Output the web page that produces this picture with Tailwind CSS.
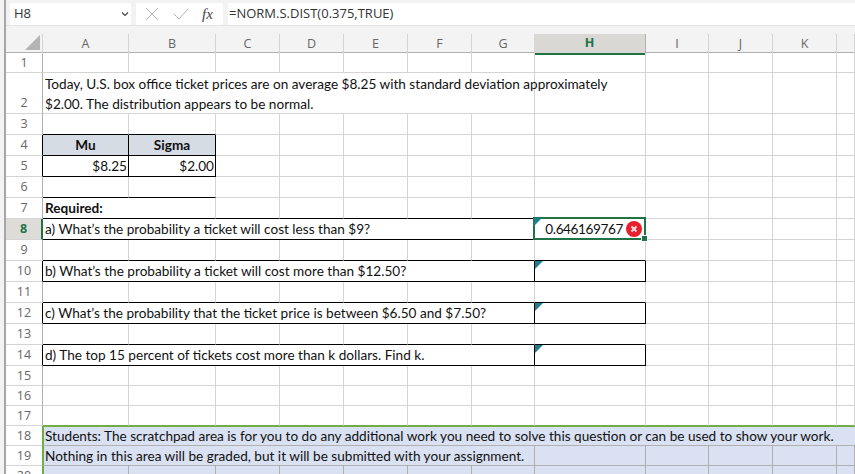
<!DOCTYPE html>
<html lang="en">
<head>
  <meta charset="UTF-8" />
  <title>Sheet</title>
  <script src="https://cdn.jsdelivr.net/npm/@tailwindcss/browser@4"></script>
</head>
<body class="w-[855px] h-[474px] overflow-hidden bg-white text-[13.6px] text-[#111] font-['Lato','Liberation_Sans',sans-serif]">
  <div class="flex h-full">
    <div class="w-[4px] shrink-0 bg-[#f3f3f3]"></div>
    <div class="w-[2px] shrink-0 bg-[#a6a6a6]"></div>
    <div class="flex-1 min-w-0 flex flex-col overflow-hidden">
      <!-- formula bar -->
      <div class="h-[26px] shrink-0 bg-[#f3f3f3] border-b border-[#e3e3e3] -ml-[2px] flex items-stretch pt-[3px] pl-[6px] gap-[5px] font-['Open_Sans',sans-serif] text-[13px] text-[#333]">
        <div class="w-[121px] bg-white flex items-center justify-between pl-[4px] pr-[2px]">
          <span>H8</span>
          <svg width="8" height="6" viewBox="0 0 8 6" fill="none" stroke="#444" stroke-width="1.2"><path d="M1 1.5 L4 4.5 L7 1.5" /></svg>
        </div>
        <div class="w-[87px] bg-white flex items-center pl-[9px] gap-[14px]">
          <svg width="14" height="14" viewBox="0 0 14 14" stroke="#b5b5b5" stroke-width="1" fill="none"><path d="M1 1 L13 13 M13 1 L1 13" /></svg>
          <svg width="16" height="14" viewBox="0 0 16 14" stroke="#b5b5b5" stroke-width="1" fill="none"><path d="M1 7 L6 12 L15 2" /></svg>
          <span class="font-['Liberation_Serif',serif] italic text-[15px] text-[#444] -ml-[1px]">fx</span>
        </div>
        <div class="flex-1 bg-white flex items-center pl-[1px]">=NORM.S.DIST(0.375,TRUE)</div>
      </div>
      <div class="h-[8px] shrink-0 bg-[#f3f3f3]"></div>
      <!-- column headers -->
      <div id="head" class="h-[19px] shrink-0 bg-[#f3f3f3] border-b border-[#b0b0b0] grid grid-cols-[37px_86px_87px_64px_64px_64px_64px_63px_111px_63px_64px_64px_1fr] font-['Open_Sans',sans-serif] text-[12.5px] text-[#666]"></div>
      <!-- rows -->
      <div id="sheet" class="shrink-0 grid grid-cols-[37px_86px_87px_64px_64px_64px_64px_63px_111px_63px_64px_64px_1fr] grid-rows-[20px_41px_21px_21px_21px_21px_21px_21px_21px_21px_21px_21px_21px_21px_20px_20px_20px_20px_20px_20px]"></div>
    </div>
  </div>

  <script>
    const head = document.getElementById('head');
    const sheet = document.getElementById('sheet');
    const cols = ['A', 'B', 'C', 'D', 'E', 'F', 'G', 'H', 'I', 'J', 'K', ''];

    // corner
    let headHtml = `<div class="relative border-r border-[#d4d4d4]">
      <svg class="absolute left-[19px] top-[1px]" width="15" height="15" viewBox="0 0 15 15"><path d="M15 0 V15 H0 Z" fill="#b4b4b4" /></svg>
    </div>`;
    cols.forEach(c => {
      if (c === 'H') {
        headHtml += `<div class="bg-[#d9d8d4] border-b-2 border-b-[#217346] border-r border-r-[#b0b0b0] -mb-px -ml-px flex items-center justify-center font-bold text-[#217346]">H</div>`;
      } else {
        headHtml += `<div class="border-r border-[#d4d4d4] flex items-center justify-center">${c}</div>`;
      }
    });
    head.innerHTML = headHtml;

    const questions = {
      8: "a) What’s the probability a ticket will cost less than $9?",
      10: "b) What’s the probability a ticket will cost more than $12.50?",
      12: "c) What’s the probability that the ticket price is between $6.50 and $7.50?",
      14: "d) The top 15 percent of tickets cost more than k dollars. Find k."
    };
    const blank = 'border-r border-b border-[#d4d4d4]';
    const blackBottom = 'border-r border-b border-r-[#d4d4d4] border-b-black';
    const blueCell = 'bg-[#d9e1f2] border-r border-b border-[#b0b0b0]';
    const blanks = (n, cls = blank) => `<div class="${cls}"></div>`.repeat(n);
    const marker = `<svg class="absolute left-0 top-0" width="8" height="8" viewBox="0 0 8 8"><path d="M0 0 H8 L0 8 Z" fill="#1f7f8f" /></svg>`;

    function rowHead(n) {
      let edge = 'border-r-[#b0b0b0]';
      if ([4, 5, 10, 12, 14].includes(n)) edge = 'border-r-black';
      if (n === 8) edge = 'border-r-2 border-r-[#217346]';
      const look = n === 8 ? 'bg-[#dedcd8] font-bold text-[#217346]' : 'text-[#666]';
      const align = n === 2 ? 'items-end' : 'items-center pt-[1px]';
      return `<div class="flex ${align} justify-center border-r border-b border-b-[#d4d4d4] ${edge} font-['Open_Sans',sans-serif] text-[12.5px] ${look}">${n}</div>`;
    }

    let html = '';
    for (let n = 1; n <= 20; n++) {
      html += rowHead(n);
      if (n === 2) {
        html += `<div class="col-span-7 ${blank} pl-[2px] pt-[1px] leading-[20px] flex flex-col justify-end whitespace-nowrap"><div>Today, U.S. box office ticket prices are on average $8.25 with standard deviation approximately</div><div class="-mb-[1px]">$2.00. The distribution appears to be normal.</div></div>` + blanks(5);
      } else if (n === 3) {
        html += blanks(2, blackBottom) + blanks(10);
      } else if (n === 4) {
        html += `<div class="bg-[#d6dce4] border-r border-b border-black pt-[1px] flex items-center justify-center font-bold">Mu</div><div class="bg-[#d6dce4] border-r border-b border-black pt-[1px] flex items-center justify-center font-bold">Sigma</div>` + blanks(10);
      } else if (n === 5) {
        html += `<div class="border-r border-b border-black pt-[1px] flex items-center justify-end pr-[1px]">$8.25</div><div class="border-r border-b border-black pt-[1px] flex items-center justify-end pr-[1px]">$2.00</div>` + blanks(10);
      } else if (n === 6) {
        html += blanks(2, blackBottom) + blanks(10);
      } else if (n === 7) {
        html += `<div class="col-span-2 ${blackBottom} pl-[2px] pt-[1px] font-bold flex items-center whitespace-nowrap">Required:</div>` + blanks(5, blackBottom) + blanks(1, blackBottom) + blanks(4);
      } else if (n === 9 || n === 11 || n === 13) {
        html += blanks(8, blackBottom) + blanks(4);
      } else if (questions[n]) {
        html += `<div class="col-span-7 border-r border-b border-black pl-[2px] pt-[1px] flex items-center whitespace-nowrap">${questions[n]}</div>`;
        if (n === 8) {
          html += `<div class="relative border-r border-b border-black z-10">
            <div class="absolute -left-[2px] -top-[2px] -right-[1px] -bottom-[1px] border-2 border-[#217346] pt-[1px] flex items-center justify-end pr-[21px] tracking-[-0.4px]">0.646169767</div>
            <svg class="absolute -left-[1px] -top-[1px]" width="8" height="8" viewBox="0 0 8 8"><path d="M0 0 H8 L0 8 Z" fill="#1f7f8f" /></svg>
            <svg class="absolute right-[3px] top-[2px]" width="16" height="16" viewBox="0 0 16 16"><circle cx="8" cy="8" r="8" fill="#e81f2d" /><path d="M5.5 5.5 L10.5 10.5 M10.5 5.5 L5.5 10.5" stroke="#fff" stroke-width="2" stroke-opacity="0.85" /></svg>
            <div class="absolute -right-[3px] -bottom-[3px] w-[5px] h-[5px] bg-[#217346] border border-white box-content"></div>
          </div>`;
        } else {
          html += `<div class="relative border-r border-b border-black">${marker}</div>`;
        }
        html += blanks(4);
      } else if (n === 17) {
        html += blanks(12, 'border-r border-b border-r-[#d4d4d4] border-b-[#70ad47]');
      } else if (n === 18) {
        html += `<div class="col-span-12 bg-[#d9e1f2] border-t border-t-[#70ad47] border-b border-b-[#b0b0b0] border-l-2 border-l-[#70ad47] -ml-px pl-[1px] pt-[1px] flex items-center whitespace-nowrap">Students: The scratchpad area is for you to do any additional work you need to solve this question or can be used to show your work.</div>`;
      } else if (n === 19) {
        html += `<div class="col-span-7 bg-[#d9e1f2] border-r border-b border-[#b0b0b0] border-l-2 border-l-[#70ad47] -ml-px pl-[1px] pt-[1px] flex items-center whitespace-nowrap">Nothing in this area will be graded, but it will be submitted with your assignment.</div>` + blanks(5, blueCell);
      } else if (n === 20) {
        html += `<div class="bg-[#d9e1f2] border-r border-[#b0b0b0] border-l-2 border-l-[#70ad47] -ml-px"></div>` + blanks(11, 'bg-[#d9e1f2] border-r border-[#b0b0b0]');
      } else {
        html += blanks(12);
      }
    }
    sheet.innerHTML = html;
  </script>
</body>
</html>
